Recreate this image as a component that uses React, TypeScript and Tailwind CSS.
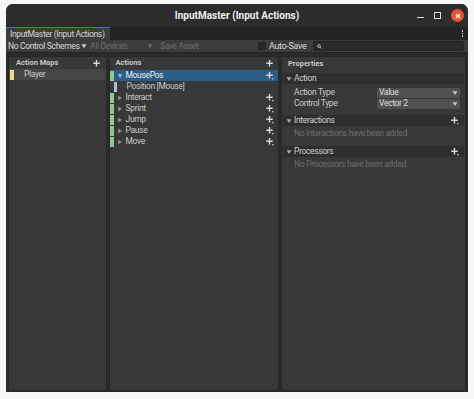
import React from 'react';

const font = { fontFamily: 'Roboto, "Noto Sans", sans-serif' };

const Plus = ({ small }: { small?: boolean }) => (
    <svg width="9" height="9" viewBox="0 0 9 9" className="shrink-0">
        <path d="M4.5 1v6.5M1.25 4.25h6.5" stroke="#d6d6d6" strokeWidth="1.4" />
        {small && <rect x="7.2" y="7" width="1.3" height="1.3" fill="#d6d6d6" />}
    </svg>
);

const TriRight = () => (
    <svg width="6" height="6" viewBox="0 0 6 6" className="shrink-0">
        <path d="M1 0.5L5 3L1 5.5Z" fill="#8a8a8a" />
    </svg>
);

const TriDown = ({ color = '#bdbdbd' }: { color?: string }) => (
    <svg width="6" height="6" viewBox="0 0 6 6" className="shrink-0">
        <path d="M0.5 1.2L5.5 1.2L3 5Z" fill={color} />
    </svg>
);

const actions = ['Interact', 'Sprint', 'Jump', 'Pause', 'Move'];

const ActionRow = ({ name }: { name: string }) => (
    <div className="flex h-[11px] items-center">
        <div className="w-[4px] h-[10px] bg-[#8fc78f]" />
        <div className="ml-[3px]"><TriRight /></div>
        <span className="ml-[3px] text-[8.5px] text-[#c8c8c8] leading-none whitespace-nowrap">{name}</span>
        <div className="ml-auto mr-[4px]"><Plus small /></div>
    </div>
);

const Section = ({ title, plus }: { title: string; plus?: boolean }) => (
    <div className="flex h-[11px] items-center bg-[#2e2e2e] mx-[1px] px-[3px]">
        <TriDown color="#a8a8a8" />
        <span className="ml-[2px] text-[8.5px] text-[#cfcfcf] leading-none whitespace-nowrap">{title}</span>
        {plus && <div className="ml-auto mr-[2px]"><Plus small /></div>}
    </div>
);

const Dropdown = ({ value }: { value: string }) => (
    <div className="flex h-[10px] w-[83px] items-center rounded-[2px] bg-[#515151] px-[2px]">
        <span className="text-[8.5px] text-[#dedede] leading-none whitespace-nowrap">{value}</span>
        <div className="ml-auto"><TriDown color="#c4c4c4" /></div>
    </div>
);

export default function App() {
    return (
        <div className="w-[474px] h-[399px] bg-[#f6f6f6] pt-[4px] pl-[6px] tracking-[-0.35px]" style={font}>
            <div className="w-[462px] h-[388px] rounded-t-[7px] bg-[#2b2b2b] overflow-hidden flex flex-col">
                {/* title bar */}
                <div className="relative h-[23px] flex items-center justify-center bg-[#2c2c2c] shrink-0">
                    <span className="text-[10px] font-bold text-[#eeeeee] tracking-normal whitespace-nowrap">InputMaster (Input Actions)</span>
                    <div className="absolute right-[4px] top-[5px] flex items-center gap-[10px]">
                        <div className="w-[7px] h-[1.5px] bg-[#d8d8d8] mt-[4px]" />
                        <div className="w-[7px] h-[7px] border-[1.5px] border-[#d8d8d8]" />
                        <div className="w-[13px] h-[13px] rounded-full bg-[#e9542a] flex items-center justify-center">
                            <svg width="6" height="6" viewBox="0 0 6 6">
                                <path d="M1 1L5 5M5 1L1 5" stroke="#fff" strokeWidth="1.3" />
                            </svg>
                        </div>
                    </div>
                </div>
                {/* tab row */}
                <div className="h-[13px] flex items-stretch bg-[#232323] shrink-0">
                    <div className="w-[104px] bg-[#3c3c3c] border-t border-[#3a79bb] flex items-center pl-[4px]">
                        <span className="text-[8.5px] text-[#d2d2d2] leading-none whitespace-nowrap">InputMaster (Input Actions)</span>
                    </div>
                    <div className="ml-auto mr-[5px] flex flex-col justify-center gap-[1px]">
                        <div className="w-[1.5px] h-[1.5px] bg-[#cfcfcf]" />
                        <div className="w-[1.5px] h-[1.5px] bg-[#cfcfcf]" />
                        <div className="w-[1.5px] h-[1.5px] bg-[#cfcfcf]" />
                    </div>
                </div>
                {/* toolbar */}
                <div className="h-[13px] flex items-center bg-[#3c3c3c] border-b border-[#232323] shrink-0">
                    <div className="flex items-center gap-[2px] pl-[2px] w-[83px] shrink-0">
                        <span className="text-[8.5px] text-[#d6d6d6] leading-none whitespace-nowrap">No Control Schemes</span>
                        <TriDown color="#d6d6d6" />
                    </div>
                    <div className="flex items-center w-[66px] pl-[1px] shrink-0">
                        <span className="text-[8.5px] text-[#6c6c6c] leading-none whitespace-nowrap">All Devices</span>
                        <div className="ml-auto mr-[2px]"><TriDown color="#6c6c6c" /></div>
                    </div>
                    <div className="flex items-center pl-[5px] w-[103px] shrink-0">
                        <span className="text-[8.5px] text-[#6c6c6c] leading-none whitespace-nowrap">Save Asset</span>
                    </div>
                    <div className="w-[8px] h-[8px] bg-[#262626] rounded-[1px] shrink-0" />
                    <span className="ml-[3px] text-[9px] text-[#d6d6d6] leading-none whitespace-nowrap">Auto-Save</span>
                    <div className="ml-auto mr-[4px] h-[10px] w-[151px] bg-[#2a2a2a] rounded-[2px] border border-[#232323] flex items-center pl-[3px]">
                        <svg width="5" height="5" viewBox="0 0 5 5">
                            <circle cx="2" cy="2" r="1.4" stroke="#cfcfcf" strokeWidth="0.8" fill="none" />
                            <path d="M3 3L4.5 4.5" stroke="#cfcfcf" strokeWidth="0.8" />
                        </svg>
                    </div>
                </div>
                {/* panels */}
                <div className="flex-1 flex pt-[3px] pl-[2px] pr-[2px] pb-[1px] gap-[2px] bg-[#2b2b2b]">
                    {/* Action maps */}
                    <div className="w-[100px] bg-[#383838] border border-[#262626] flex flex-col">
                        <div className="h-[12px] flex items-center pl-[7px] pr-[5px]">
                            <span className="text-[7.5px] font-bold text-[#c8c8c8] tracking-normal leading-none whitespace-nowrap">Action Maps</span>
                            <div className="ml-auto"><Plus /></div>
                        </div>
                        <div className="h-[11px] flex items-center bg-[#464646]">
                            <div className="w-[4px] h-[10px] bg-[#efdb8e] ml-[1px]" />
                            <span className="ml-[10px] text-[8.5px] text-[#c8c8c8] leading-none whitespace-nowrap">Player</span>
                        </div>
                    </div>
                    {/* Actions */}
                    <div className="w-[173px] bg-[#383838] border border-[#262626] flex flex-col">
                        <div className="h-[12px] flex items-center pl-[6px] pr-[4px]">
                            <span className="text-[7.5px] font-bold text-[#c8c8c8] tracking-normal leading-none whitespace-nowrap">Actions</span>
                            <div className="ml-auto"><Plus /></div>
                        </div>
                        <div className="flex h-[11px] items-center bg-[#2c5d87] mt-[1px]">
                            <div className="w-[4px] h-[10px] bg-[#8fc78f]" />
                            <div className="ml-[3px]"><TriDown color="#9cb6cc" /></div>
                            <span className="ml-[3px] text-[8.5px] text-[#e8e8e8] leading-none whitespace-nowrap">MousePos</span>
                            <div className="ml-auto mr-[4px]"><Plus small /></div>
                        </div>
                        <div className="flex h-[11px] items-center">
                            <div className="ml-[4px] w-[3px] h-[10px] bg-[#a9c3d1]" />
                            <span className="ml-[10px] text-[8.5px] text-[#c8c8c8] leading-none whitespace-nowrap">Position [Mouse]</span>
                        </div>
                        {actions.map((a) => (
                            <ActionRow key={a} name={a} />
                        ))}
                    </div>
                    {/* Properties */}
                    <div className="flex-1 bg-[#383838] border border-[#262626] flex flex-col">
                        <div className="h-[14px] flex items-center pl-[6px]">
                            <span className="text-[7.5px] font-bold text-[#c8c8c8] tracking-normal leading-none whitespace-nowrap">Properties</span>
                        </div>
                        <div className="mt-[2px]"><Section title="Action" /></div>
                        <div className="flex h-[11px] items-center mt-[3px] pl-[12px] pr-[5px]">
                            <span className="text-[8.5px] text-[#c8c8c8] leading-none w-[83px] whitespace-nowrap">Action Type</span>
                            <Dropdown value="Value" />
                        </div>
                        <div className="flex h-[11px] items-center pl-[12px] pr-[5px]">
                            <span className="text-[8.5px] text-[#c8c8c8] leading-none w-[83px] whitespace-nowrap">Control Type</span>
                            <Dropdown value="Vector 2" />
                        </div>
                        <div className="mt-[6px]"><Section title="Interactions" plus /></div>
                        <div className="h-[15px] flex items-center pl-[12px]">
                            <span className="text-[8.5px] text-[#6e6e6e] leading-none whitespace-nowrap">No Interactions have been added.</span>
                        </div>
                        <div className="mt-[5px]"><Section title="Processors" plus /></div>
                        <div className="h-[15px] flex items-center pl-[12px]">
                            <span className="text-[8.5px] text-[#6e6e6e] leading-none whitespace-nowrap">No Processors have been added.</span>
                        </div>
                    </div>
                </div>
            </div>
        </div>
    );
}
